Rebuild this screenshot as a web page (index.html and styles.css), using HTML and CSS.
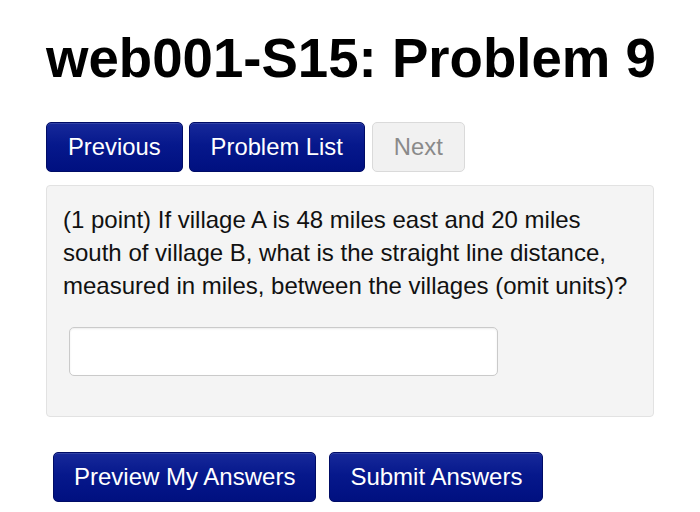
FILE: index.html
```html
<!DOCTYPE html>
<html>
<head>
<meta charset="utf-8">
<link rel="stylesheet" href="styles.css">
</head>
<body>
<div class="page">
  <h1 class="title">web001-S15: Problem 9</h1>
  <div class="nav">
    <span class="btn btn-primary">Previous</span>
    <span class="btn btn-primary">Problem List</span>
    <span class="btn btn-disabled">Next</span>
  </div>
  <div class="well">
    <p class="question">(1 point) If village A is 48 miles east and 20 miles south of village B, what is the straight line distance, measured in miles, between the villages (omit units)?</p>
    <input class="answer" type="text">
  </div>
  <div class="actions">
    <span class="btn btn-primary btn-wide">Preview My Answers</span>
    <span class="btn btn-primary btn-wide">Submit Answers</span>
  </div>
</div>
</body>
</html>
```
FILE: styles.css
```css
html, body {
  margin: 0;
  padding: 0;
  background: #ffffff;
}
body {
  font-family: "Liberation Sans", Arial, Helvetica, sans-serif;
  color: #111;
}
.page {
  padding: 29px 0 0 46px;
  width: 608px;
}
.title {
  margin: 0;
  font-size: 54.6px;
  font-weight: bold;
  line-height: 60px;
  color: #000;
  white-space: nowrap;
}
.nav {
  margin-top: 33px;
  display: flex;
  gap: 6px;
}
.btn {
  box-sizing: border-box;
  height: 50px;
  display: flex;
  align-items: center;
  justify-content: center;
  padding: 0 21px;
  font-size: 23.8px;
  border-radius: 5px;
  border: 1px solid #000c66;
}
.btn-primary {
  color: #fff;
  background: linear-gradient(to bottom, #17299a 0%, #06188c 45%, #001080 100%);
  box-shadow: inset 0 1px 0 rgba(255,255,255,0.12);
}
.btn-disabled {
  color: #8a8a8a;
  background: #f1f1f1;
  border-color: #dadada;
  margin-left: 1px;
}
.well {
  margin-top: 13px;
  box-sizing: border-box;
  width: 608px;
  height: 232px;
  background: #f4f4f4;
  border: 1px solid #e2e2e2;
  border-radius: 4px;
  padding: 17px 0 0 16px;
}
.question {
  margin: 0;
  width: 565px;
  font-size: 24px;
  line-height: 33px;
}
.answer {
  display: block;
  box-sizing: border-box;
  margin: 25px 0 0 6px;
  width: 429px;
  height: 49px;
  background: #fff;
  border: 1px solid #cacaca;
  border-radius: 5px;
  box-shadow: inset 0 1px 2px rgba(0,0,0,0.08);
  outline: none;
}
.actions {
  margin: 35px 0 0 7px;
  display: flex;
  gap: 13px;
}
.btn-wide {
  padding: 0 20px;
  font-size: 24px;
}
```
